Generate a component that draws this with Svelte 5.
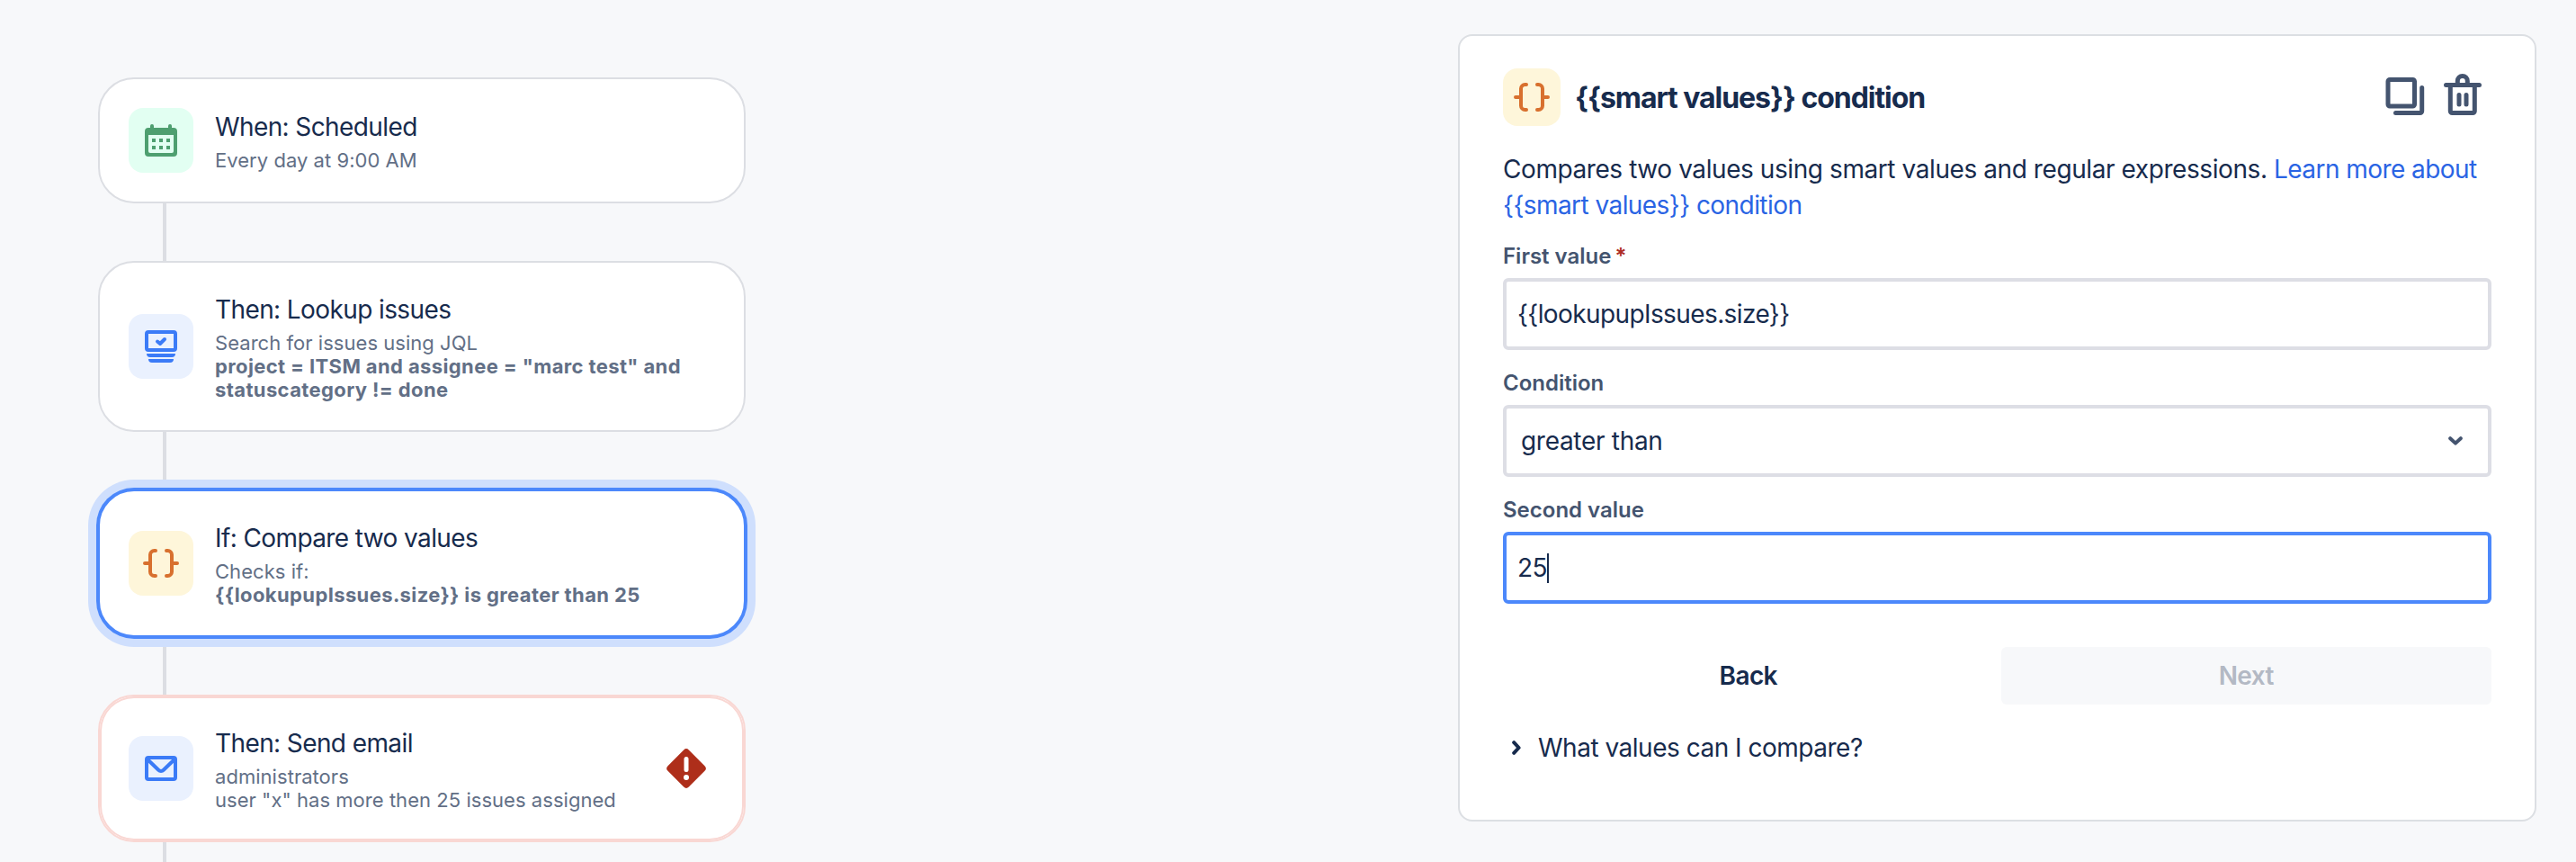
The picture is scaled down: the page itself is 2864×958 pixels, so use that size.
<script lang="ts">
  type StepIcon = "calendar" | "lookup" | "braces" | "mail";

  interface Step {
    icon: StepIcon;
    title: string;
    text: string;
    detail?: string;
    plainDetail?: boolean;
    selected?: boolean;
    invalid?: boolean;
  }

  const steps: Step[] = [
    { icon: "calendar", title: "When: Scheduled", text: "Every day at 9:00 AM" },
    {
      icon: "lookup",
      title: "Then: Lookup issues",
      text: "Search for issues using JQL",
      detail: 'project = ITSM and assignee = "marc test" and statuscategory != done',
    },
    {
      icon: "braces",
      title: "If: Compare two values",
      text: "Checks if:",
      detail: "{{lookupupIssues.size}} is greater than 25",
      selected: true,
    },
    {
      icon: "mail",
      title: "Then: Send email",
      text: "administrators",
      detail: 'user "x" has more then 25 issues assigned',
      plainDetail: true,
      invalid: true,
    },
  ];

  const smartValues = "{{smart values}}";
  const firstValue = "{{lookupupIssues.size}}";
  const condition = "greater than";
  const secondValue = "25";
</script>

{#snippet braces()}
  <svg width="40" height="32" viewBox="0 0 40 32" fill="none" stroke="currentColor" stroke-width="4" stroke-linecap="round">
    <path d="M14 2h-1.5a4.5 4.5 0 0 0-4.5 4.5v19a4.5 4.5 0 0 0 4.5 4.5H14M2 16h6" />
    <path d="M26 2h1.5a4.5 4.5 0 0 1 4.5 4.5v19a4.5 4.5 0 0 1-4.5 4.5H26M38 16h-6" />
  </svg>
{/snippet}

<div class="page">
  <main class="flow">
    {#each steps as step}
      <section class="step" class:selected={step.selected} class:invalid={step.invalid}>
        <div class="step-icon {step.icon}">
          {#if step.icon === "calendar"}
            <svg width="36" height="36" viewBox="0 0 36 36" fill="currentColor">
              <path fill-rule="evenodd" d="M6 4V2a2 2 0 0 1 4 0v2h16V2a2 2 0 0 1 4 0v2h2a4 4 0 0 1 4 4v24a4 4 0 0 1-4 4H4a4 4 0 0 1-4-4V8a4 4 0 0 1 4-4zM4 12v18a2 2 0 0 0 2 2h24a2 2 0 0 0 2-2V12z" />
              <path d="M8 16h4v4H8zM16 16h4v4h-4zM24 16h4v4h-4zM8 24h4v4H8zM16 24h4v4h-4zM24 24h4v4h-4z" />
            </svg>
          {:else if step.icon === "lookup"}
            <svg width="36" height="36" viewBox="0 0 36 36" fill="currentColor">
              <path fill-rule="evenodd" d="M4 0h28a4 4 0 0 1 4 4v16a4 4 0 0 1-4 4H4a4 4 0 0 1-4-4V4a4 4 0 0 1 4-4zM4 4v16h28V4z" />
              <path d="M14 12.5l3 2.500 5-5" fill="none" stroke="currentColor" stroke-width="4" stroke-linecap="round" stroke-linejoin="round" />
              <path d="M2 26h32a4 4 0 0 1-4 4H6a4 4 0 0 1-4-4zM4 32h28a4 4 0 0 1-4 4H8a4 4 0 0 1-4-4z" />
            </svg>
          {:else if step.icon === "braces"}
            {@render braces()}
          {:else}
            <svg width="36" height="28" viewBox="0 0 36 28" fill="none" stroke="currentColor" stroke-width="4" stroke-linejoin="round">
              <rect x="2" y="2" width="32" height="24" rx="2" />
              <path d="M3 4l12.2 11.8a4 4 0 0 0 5.6 0L33 4" />
            </svg>
          {/if}
        </div>
        <div class="step-body">
          <div class="step-title">{step.title}</div>
          <div class="step-text">{step.text}</div>
          {#if step.detail}
            <div class="step-text" class:strong={!step.plainDetail}>{step.detail}</div>
          {/if}
        </div>
        {#if step.invalid}
          <svg class="error" width="46" height="46" viewBox="0 0 46 46">
            <rect x="6.5" y="6.5" width="33" height="33" rx="4" transform="rotate(45 23 23)" fill="#ae2e1a" />
            <path d="M23 12.5v12" stroke="#fff" stroke-width="5" stroke-linecap="round" />
            <circle cx="23" cy="33" r="3" fill="#fff" />
          </svg>
        {/if}
      </section>
      <div class="connector"></div>
    {/each}
  </main>

  <aside class="panel">
    <header class="panel-header">
      <div class="panel-icon">{@render braces()}</div>
      <h2>{smartValues} condition</h2>
      <button class="icon-button" aria-label="Duplicate">
        <svg width="44" height="48" viewBox="0 0 44 48" fill="none" stroke="currentColor" stroke-width="5" stroke-linecap="round" stroke-linejoin="round">
          <rect x="3" y="7.5" width="29.5" height="29.5" rx="2" />
          <path d="M40.7 16.500v26a2 2 0 0 1-2 2H11.500" />
        </svg>
      </button>
      <button class="icon-button" aria-label="Delete">
        <svg width="44" height="48" viewBox="0 0 44 48" fill="none" stroke="currentColor" stroke-width="5" stroke-linecap="round" stroke-linejoin="round">
          <path d="M3.500 13.500h37M8.300 14v28.500a2 2 0 0 0 2 2h23a2 2 0 0 0 2-2V14M16.300 13V9a5.500 5.500 0 0 1 11 0v4M18 24.500v10.500M26 24.500v10.500" />
        </svg>
      </button>
    </header>

    <p class="description">
      Compares two values using smart values and regular expressions.
      <a href="#learn">Learn more about {smartValues} condition</a>
    </p>

    <div class="label">First value<span class="required">*</span></div>
    <div class="field">{firstValue}</div>

    <div class="label">Condition</div>
    <div class="field select">
      {condition}
      <svg width="16" height="10" viewBox="0 0 16 10" fill="none" stroke="#44546f" stroke-width="4" stroke-linecap="round" stroke-linejoin="round">
        <path d="M2.200 2.200L8 7.600l5.800-5.400" />
      </svg>
    </div>

    <div class="label">Second value</div>
    <div class="field focused">{secondValue}<span class="caret"></span></div>

    <div class="actions">
      <button class="button">Back</button>
      <button class="button" disabled>Next</button>
    </div>

    <div class="disclosure">
      <svg width="10" height="16" viewBox="0 0 10 16" fill="none" stroke="currentColor" stroke-width="4" stroke-linecap="round" stroke-linejoin="round">
        <path d="M2.200 2.200L7.600 8l-5.400 5.800" />
      </svg>
      What values can I compare?
    </div>
  </aside>
</div>

<style>
  :global(body) {
    background: #f7f8fa;
    overflow: hidden;
  }
  .page {
    box-sizing: border-box;
    display: flex;
    justify-content: space-between;
    align-items: flex-start;
    height: 958px;
    padding: 38px 44px 0 109px;
    overflow: hidden;
    font-family: Inter, "Liberation Sans", sans-serif;
    font-size: 28px;
    color: #172b4d;
  }
  svg {
    display: block;
    flex: none;
  }
  .flow {
    width: 720px;
    padding-top: 48px;
  }
  .step {
    box-sizing: border-box;
    display: flex;
    align-items: center;
    padding: 32px;
    background: #fff;
    border: 2px solid #dcdee3;
    border-radius: 40px;
  }
  .step.selected {
    position: relative;
    border-color: #4c88fb;
    box-shadow: 0 0 0 2px #4c88fb, 0 0 0 11px #cfdffd;
  }
  .step.invalid {
    border-color: #f9d7d3;
    box-shadow: inset 0 0 0 2px #f9d7d3;
  }
  .connector {
    width: 4px;
    height: 64px;
    margin-left: 72px;
    background: #dcdee3;
  }
  .step-icon {
    display: flex;
    align-items: center;
    justify-content: center;
    flex: none;
    width: 72px;
    height: 72px;
    border-radius: 16px;
  }
  .calendar {
    background: #e2fff2;
    color: #4e9f70;
  }
  .lookup,
  .mail {
    background: #eaf1fe;
    color: #3b7bf7;
  }
  .braces,
  .panel-icon {
    background: #fef6da;
    color: #d8702e;
  }
  .step-body {
    flex: 1;
    padding-left: 24px;
  }
  .step-title {
    margin-bottom: 4px;
    line-height: 40px;
    letter-spacing: -0.6px;
  }
  .step-text {
    font-size: 22px;
    line-height: 26px;
    letter-spacing: 0.04px;
    color: #626f86;
  }
  .step-text.strong {
    font-weight: 700;
    letter-spacing: 0.38px;
  }
  .error {
    margin-right: 9px;
  }
  .panel {
    box-sizing: border-box;
    width: 1199px;
    height: 875px;
    padding: 36px 48px 0;
    background: #fff;
    border: 2px solid #dcdfe3;
    border-radius: 16px;
  }
  .panel-header {
    display: flex;
    align-items: center;
    height: 64px;
  }
  .panel-icon {
    display: flex;
    align-items: center;
    justify-content: center;
    width: 64px;
    height: 64px;
    border-radius: 16px;
  }
  h2 {
    flex: 1;
    margin: 1px 0 0 16px;
    font-size: 32px;
    font-weight: 700;
    line-height: 40px;
    letter-spacing: -1.05px;
  }
  .icon-button {
    margin: 0 10px 6px;
    padding: 0;
    border: none;
    background: none;
    color: #44546f;
  }
  .description {
    margin: 28px 0 21px;
    line-height: 40px;
    letter-spacing: -0.42px;
  }
  a {
    color: #2a64e4;
    letter-spacing: -0.56px;
    text-decoration: none;
  }
  .label {
    margin-bottom: 8px;
    font-size: 24px;
    font-weight: 600;
    line-height: 32px;
    color: #44546f;
  }
  .required {
    padding-left: 4px;
    color: #ae2e24;
  }
  .field {
    box-sizing: border-box;
    display: flex;
    align-items: center;
    height: 80px;
    margin-bottom: 21px;
    padding: 0 12px;
    border: 4px solid #dddee5;
    border-radius: 6px;
    letter-spacing: -0.6px;
  }
  .select {
    justify-content: space-between;
    padding: 0 28px 0 16px;
    letter-spacing: -0.3px;
  }
  .focused {
    border-color: #4c88fb;
  }
  .caret {
    width: 2px;
    height: 33px;
    background: #172b4d;
  }
  .actions {
    display: grid;
    grid-template-columns: 1fr 1fr;
    gap: 8px;
    margin-top: 48px;
  }
  .button {
    height: 64px;
    padding: 0;
    border: none;
    border-radius: 6px;
    background: none;
    font: inherit;
    font-weight: 600;
    letter-spacing: -0.6px;
    color: #172b4d;
  }
  .button:disabled {
    background: #f7f8fa;
    color: #b3b9c4;
  }
  .disclosure {
    display: flex;
    align-items: center;
    gap: 19px;
    margin-top: 28px;
    padding-left: 10px;
    line-height: 40px;
    letter-spacing: -0.49px;
  }
</style>
